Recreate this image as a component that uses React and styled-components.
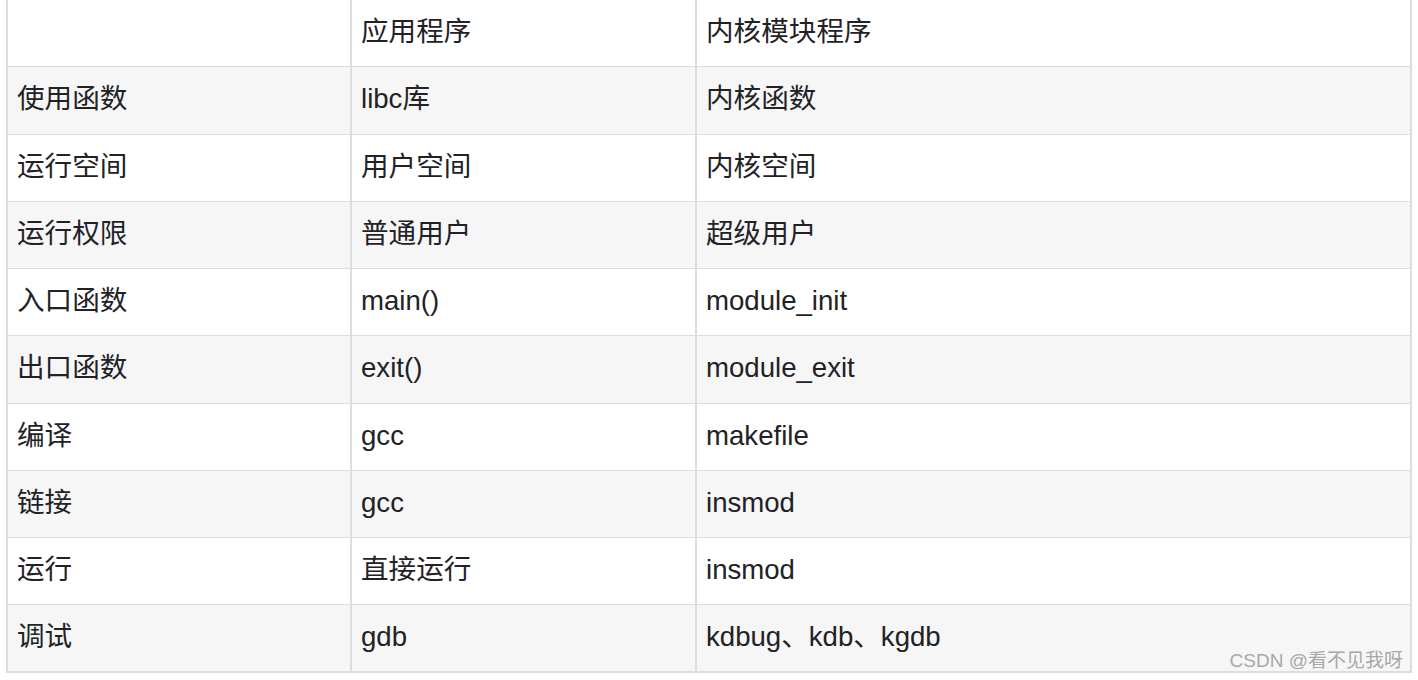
import React from "react";
import styled, { createGlobalStyle } from "styled-components";

const Global = createGlobalStyle`
  html, body {
    margin: 0;
    padding: 0;
    background: #ffffff;
  }
  body {
    font-family: "Liberation Sans", "Noto Sans CJK SC", sans-serif;
    color: #222226;
  }
`;

const Page = styled.div`
  position: relative;
  width: 1418px;
  height: 680px;
  padding: 0 6px 0 6px;
  box-sizing: border-box;
  overflow: hidden;
`;

const Table = styled.table`
  width: 1406px;
  border-collapse: collapse;
  table-layout: fixed;
  border-left: 2px solid #dddddd;
  border-right: 2px solid #dddddd;
  border-bottom: 2px solid #dddddd;
  margin-top: -1px;
`;

const Row = styled.tr`
  height: 67.25px;
  background: ${(p) => (p.$striped ? "#f6f6f6" : "#ffffff")};
`;

const Cell = styled.td`
  border: 1px solid #dddddd;
  border-left-width: ${(p) => (p.$first ? "0" : "2px")};
  padding: 0 0 2px 9px;
  font-size: 27.6px;
  line-height: 32px;
  vertical-align: middle;
  white-space: nowrap;
`;

const Watermark = styled.div`
  position: absolute;
  right: 15px;
  bottom: 8px;
  font-size: 19px;
  color: #a8a8a8;
  font-family: "Liberation Sans", "Noto Sans CJK SC", sans-serif;
`;

const rows = [
  ["", "应用程序", "内核模块程序"],
  ["使用函数", "libc库", "内核函数"],
  ["运行空间", "用户空间", "内核空间"],
  ["运行权限", "普通用户", "超级用户"],
  ["入口函数", "main()", "module_init"],
  ["出口函数", "exit()", "module_exit"],
  ["编译", "gcc", "makefile"],
  ["链接", "gcc", "insmod"],
  ["运行", "直接运行", "insmod"],
  ["调试", "gdb", "kdbug、kdb、kgdb"],
];

const App = () => {
  return (
    <Page>
      <Global />
      <Table>
        <colgroup>
          <col style={{ width: 344 }} />
          <col style={{ width: 345 }} />
          <col />
        </colgroup>
        <tbody>
          {rows.map((items, key) => (
            <Row key={key} $striped={key % 2 === 1}>
              {items.map((text, i) => (
                <Cell key={i} $first={i === 0}>
                  {text}
                </Cell>
              ))}
            </Row>
          ))}
        </tbody>
      </Table>
      <Watermark>CSDN @看不见我呀</Watermark>
    </Page>
  );
};

export default App;
